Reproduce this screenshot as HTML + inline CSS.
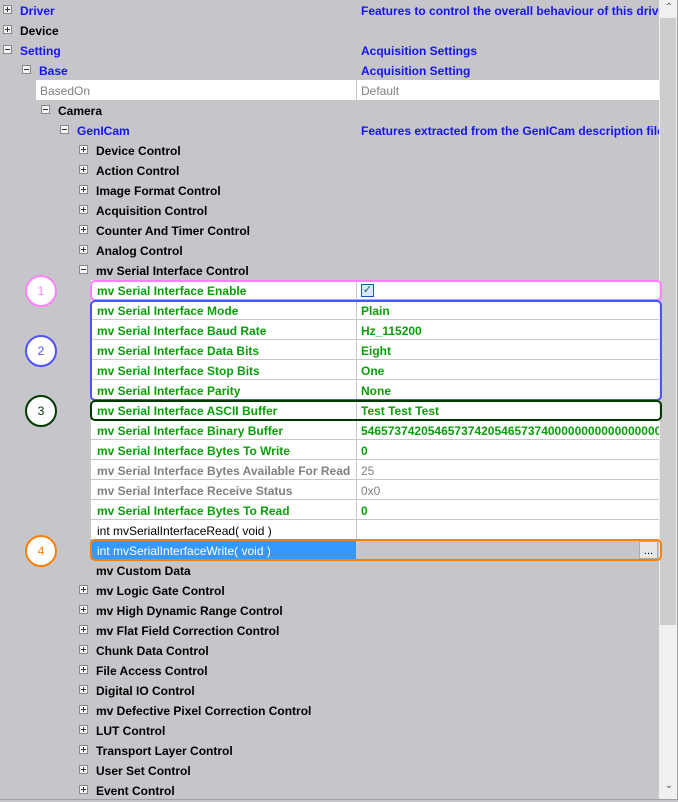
<!DOCTYPE html><html><head><style>
*{margin:0;padding:0;box-sizing:border-box}
body{width:678px;height:800px;overflow:hidden;background:#c6c5ca;font-family:"Liberation Sans",Tahoma,sans-serif;font-size:12px;position:relative}
.r{position:absolute;height:20px;line-height:22px;white-space:nowrap;font-weight:bold;color:#000}
.b{color:#1414f0}.g{color:#0a9e0a}.gr{color:#808080}.n{font-weight:normal}
.ex{position:absolute;width:9px;height:9px;border:1px solid #888;background:#f4f4f4}
.ex:before{content:"";position:absolute;left:1px;top:3px;width:5px;height:1px;background:#333}
.ex.p:after{content:"";position:absolute;left:3px;top:1px;width:1px;height:5px;background:#333}
.cell{position:absolute;background:#fff;height:20px;border-bottom:1px solid #c8c8c8}
.circ{position:absolute;width:32px;height:32px;border-radius:50%;background:#fff;border:2px solid;text-align:center;line-height:28px;font-size:12px}
.hl{position:absolute;border:2px solid;border-radius:5px;z-index:5}
</style></head><body>
<div class="cell" style="left:36px;top:80px;width:623px;border:none"></div>
<div class="cell" style="left:91px;top:280px;width:568px;height:260px;border:none"></div>
<div style="position:absolute;left:91px;top:540px;width:265px;height:20px;background:#3399ff"></div>
<div style="position:absolute;left:356px;top:80px;width:1px;height:20px;background:#c8c8c8"></div>
<div style="position:absolute;left:356px;top:280px;width:1px;height:280px;background:#c8c8c8"></div>
<div style="position:absolute;left:91px;top:299px;width:568px;height:1px;background:#c8c8c8;box-shadow:0 20px #c8c8c8,0 40px #c8c8c8,0 60px #c8c8c8,0 80px #c8c8c8,0 100px #c8c8c8,0 120px #c8c8c8,0 140px #c8c8c8,0 160px #c8c8c8,0 180px #c8c8c8,0 200px #c8c8c8,0 220px #c8c8c8,0 240px #c8c8c8"></div>
<div style="position:absolute;left:639px;top:541px;width:19px;height:18px;background:#e6e6e6;border:1px solid #aaa;font-size:11px;text-align:center;line-height:18px">...</div>

<div class="ex p" style="left:3px;top:5px"></div><div class="r b" style="left:20px;top:0">Driver</div><div class="r b" style="left:361px;top:0">Features to control the overall behaviour of this drive</div>
<div class="ex p" style="left:3px;top:25px"></div><div class="r" style="left:20px;top:20px">Device</div>
<div class="ex" style="left:3px;top:45px"></div><div class="r b" style="left:20px;top:40px">Setting</div><div class="r b" style="left:361px;top:40px">Acquisition Settings</div>
<div class="ex" style="left:22px;top:65px"></div><div class="r b" style="left:39px;top:60px">Base</div><div class="r b" style="left:361px;top:60px">Acquisition Setting</div>
<div class="r n gr" style="left:40px;top:80px">BasedOn</div><div class="r n gr" style="left:361px;top:80px">Default</div>
<div class="ex" style="left:41px;top:105px"></div><div class="r" style="left:58px;top:100px">Camera</div>
<div class="ex" style="left:60px;top:125px"></div><div class="r b" style="left:77px;top:120px">GenICam</div><div class="r b" style="left:361px;top:120px">Features extracted from the GenICam description file</div>

<div class="ex p" style="left:79px;top:145px"></div><div class="r" style="left:96px;top:140px">Device Control</div>
<div class="ex p" style="left:79px;top:165px"></div><div class="r" style="left:96px;top:160px">Action Control</div>
<div class="ex p" style="left:79px;top:185px"></div><div class="r" style="left:96px;top:180px">Image Format Control</div>
<div class="ex p" style="left:79px;top:205px"></div><div class="r" style="left:96px;top:200px">Acquisition Control</div>
<div class="ex p" style="left:79px;top:225px"></div><div class="r" style="left:96px;top:220px">Counter And Timer Control</div>
<div class="ex p" style="left:79px;top:245px"></div><div class="r" style="left:96px;top:240px">Analog Control</div>
<div class="ex" style="left:79px;top:265px"></div><div class="r" style="left:96px;top:260px">mv Serial Interface Control</div>

<div class="r g" style="left:97px;top:280px">mv Serial Interface Enable</div>
<div style="position:absolute;left:361px;top:284px;width:13px;height:13px;border:1px solid #1e5aa0;background:#dbe9f7;color:#1e5aa0;font-size:11px;line-height:11px;text-align:center">✓</div>
<div class="r g" style="left:97px;top:300px">mv Serial Interface Mode</div><div class="r g" style="left:361px;top:300px">Plain</div>
<div class="r g" style="left:97px;top:320px">mv Serial Interface Baud Rate</div><div class="r g" style="left:361px;top:320px">Hz_115200</div>
<div class="r g" style="left:97px;top:340px">mv Serial Interface Data Bits</div><div class="r g" style="left:361px;top:340px">Eight</div>
<div class="r g" style="left:97px;top:360px">mv Serial Interface Stop Bits</div><div class="r g" style="left:361px;top:360px">One</div>
<div class="r g" style="left:97px;top:380px">mv Serial Interface Parity</div><div class="r g" style="left:361px;top:380px">None</div>
<div class="r g" style="left:97px;top:400px">mv Serial Interface ASCII Buffer</div><div class="r g" style="left:361px;top:400px">Test Test Test</div>
<div class="r g" style="left:97px;top:420px">mv Serial Interface Binary Buffer</div><div class="r g" style="left:361px;top:420px;width:298px;overflow:hidden">546573742054657374205465737400000000000000000</div>
<div class="r g" style="left:97px;top:440px">mv Serial Interface Bytes To Write</div><div class="r g" style="left:361px;top:440px">0</div>
<div class="r gr" style="left:97px;top:460px">mv Serial Interface Bytes Available For Read</div><div class="r n gr" style="left:361px;top:460px">25</div>
<div class="r gr" style="left:97px;top:480px">mv Serial Interface Receive Status</div><div class="r n gr" style="left:361px;top:480px">0x0</div>
<div class="r g" style="left:97px;top:500px">mv Serial Interface Bytes To Read</div><div class="r g" style="left:361px;top:500px">0</div>
<div class="r n" style="left:97px;top:520px">int mvSerialInterfaceRead( void )</div>
<div class="r n" style="left:97px;top:540px;color:#fff">int mvSerialInterfaceWrite( void )</div>
<div class="r" style="left:96px;top:560px">mv Custom Data</div>

<div class="ex p" style="left:79px;top:585px"></div><div class="r" style="left:96px;top:580px">mv Logic Gate Control</div>
<div class="ex p" style="left:79px;top:605px"></div><div class="r" style="left:96px;top:600px">mv High Dynamic Range Control</div>
<div class="ex p" style="left:79px;top:625px"></div><div class="r" style="left:96px;top:620px">mv Flat Field Correction Control</div>
<div class="ex p" style="left:79px;top:645px"></div><div class="r" style="left:96px;top:640px">Chunk Data Control</div>
<div class="ex p" style="left:79px;top:665px"></div><div class="r" style="left:96px;top:660px">File Access Control</div>
<div class="ex p" style="left:79px;top:685px"></div><div class="r" style="left:96px;top:680px">Digital IO Control</div>
<div class="ex p" style="left:79px;top:705px"></div><div class="r" style="left:96px;top:700px">mv Defective Pixel Correction Control</div>
<div class="ex p" style="left:79px;top:725px"></div><div class="r" style="left:96px;top:720px">LUT Control</div>
<div class="ex p" style="left:79px;top:745px"></div><div class="r" style="left:96px;top:740px">Transport Layer Control</div>
<div class="ex p" style="left:79px;top:765px"></div><div class="r" style="left:96px;top:760px">User Set Control</div>
<div class="ex p" style="left:79px;top:785px"></div><div class="r" style="left:96px;top:780px">Event Control</div>

<div style="position:absolute;left:659px;top:0;width:18px;height:799px;background:#f0f0f0"></div>
<div style="position:absolute;left:660px;top:18px;width:16px;height:607px;background:#cdcdcd"></div>
<div style="position:absolute;left:661px;top:2px;width:16px;font-size:10px;color:#606060;text-align:center">&#8963;</div>
<div style="position:absolute;left:661px;top:780px;width:16px;font-size:10px;color:#606060;text-align:center">&#8964;</div>
<div style="position:absolute;left:677px;top:0;width:1px;height:800px;background:#a0a0a0"></div>
<div style="position:absolute;left:0;top:799px;width:678px;height:1px;background:#a0a0a0"></div>

<div class="hl" style="left:90px;top:280px;width:572px;height:21px;border-color:#ff80ff"></div>
<div class="hl" style="left:90px;top:300px;width:572px;height:101px;border-color:#5050ff"></div>
<div class="hl" style="left:90px;top:400px;width:572px;height:21px;border-color:#003800"></div>
<div class="hl" style="left:90px;top:539px;width:572px;height:22px;border-color:#ff8000"></div>
<div class="circ" style="left:25px;top:275px;border-color:#ff80ff;color:#ff80ff">1</div>
<div class="circ" style="left:25px;top:335px;border-color:#5050ff;color:#5050ff">2</div>
<div class="circ" style="left:25px;top:395px;border-color:#003800;color:#003800">3</div>
<div class="circ" style="left:25px;top:535px;border-color:#ff8000;color:#ff8000">4</div>
</body></html>
